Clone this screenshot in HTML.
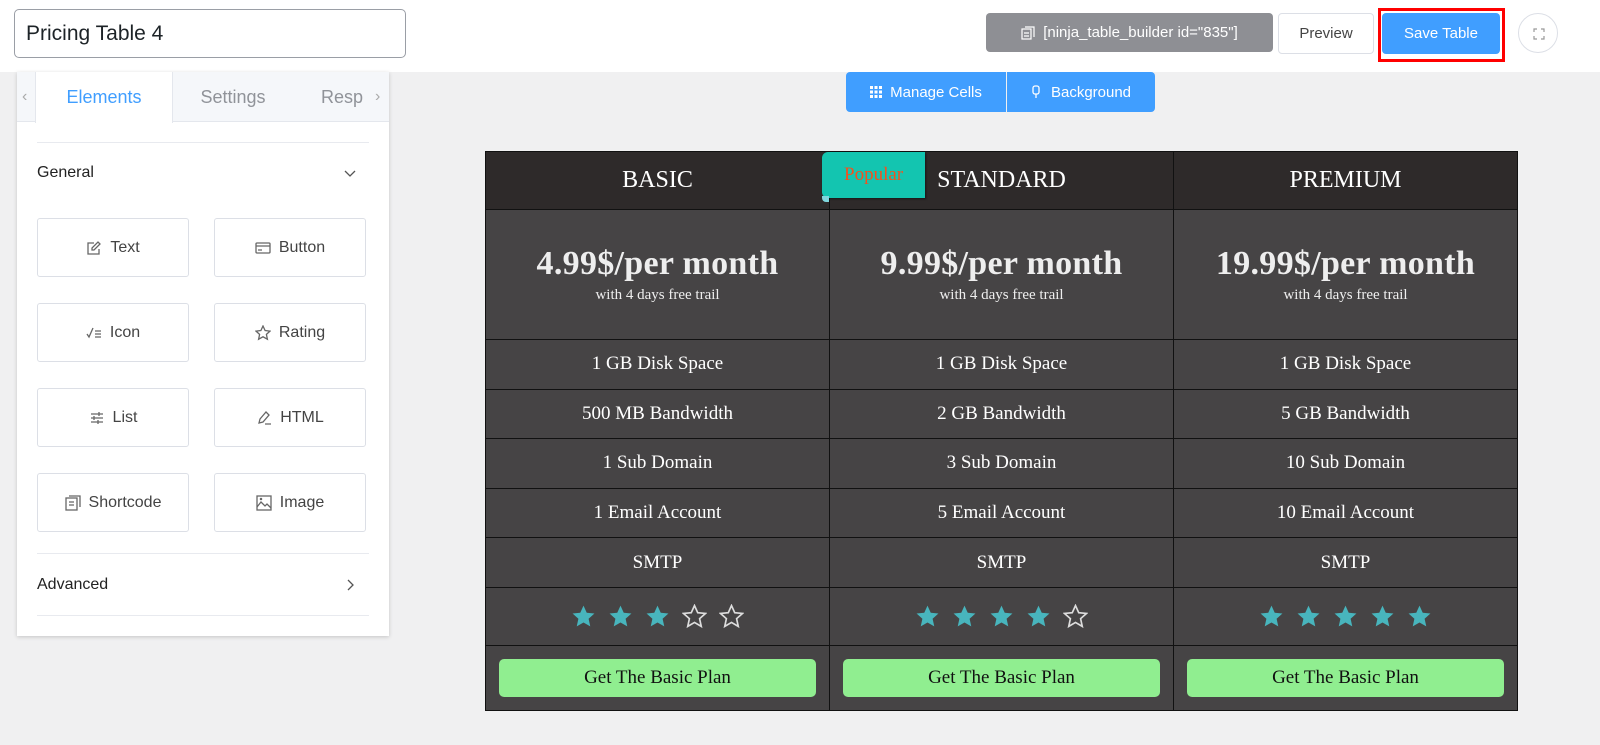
<!DOCTYPE html>
<html><head><style>
*{box-sizing:border-box;margin:0;padding:0}
body{width:1600px;height:745px;background:#f0f0f1;font-family:"Liberation Sans",sans-serif;position:relative;overflow:hidden}
.abs{position:absolute}
.top{left:0;top:0;width:1600px;height:72px;background:#fff}
.inp{left:14px;top:9px;width:392px;height:49px;border:1px solid #9a9ea6;border-radius:5px;font-size:21px;color:#1d2327;padding:12px 11px}
.btn{display:flex;align-items:center;justify-content:center;font-size:15px;border-radius:4px}
.panel{left:17px;top:72px;width:372px;height:564px;background:#fff;box-shadow:0 1px 4px rgba(0,0,0,.18)}
.tabs{left:0;top:0;width:372px;height:50px;background:#f5f7fa;border-bottom:1px solid #e4e7ed}
.tab{top:0;height:50px;font-size:18px;color:#909399;display:flex;align-items:center;justify-content:center}
.hr{left:20px;width:332px;height:1px;background:#e8eaef}
.card{width:152px;height:59px;border:1px solid #dcdfe6;border-radius:3px;display:flex;align-items:center;justify-content:center;font-size:16px;color:#444;gap:8px}
.card svg{width:16px;height:16px;stroke:#666;fill:none;stroke-width:1.3}
table{position:absolute;left:485px;top:151px;width:1033px;border-collapse:collapse;font-family:"Liberation Serif",serif;color:#fff}
td{border:1px solid #111;background:#464445;text-align:center;width:344px;font-size:19px}
.h td{background:#2e2a2a;height:58px;font-size:24px}
.p td{height:130px}
.p b{display:block;font-size:34px;font-weight:700;color:#eee;letter-spacing:.3px;line-height:38px}
.p span{font-size:15px;color:#eee}
.f td{height:49.6px}
.s td{height:58px}
.s svg{width:25px;height:25px;margin:0 6px;vertical-align:middle}
.g td{height:65px}
.g div{margin:0 13px;height:38px;background:#90ee90;border-radius:5px;color:#111;font-size:19px;display:flex;align-items:center;justify-content:center}
</style></head><body>
<div class="abs top"></div>
<div class="abs inp">Pricing Table 4</div>
<div class="abs btn" style="left:986px;top:13px;width:287px;height:39px;background:#8e8f94;color:#fff">
<svg width="14" height="14" viewBox="0 0 14 14" fill="none" stroke="#fff" stroke-width="1.2" style="margin-right:8px"><rect x="1" y="3" width="9" height="10"/><path d="M4 1h9v10M3 7h5M3 10h5"/></svg>[ninja_table_builder id="835"]</div>
<div class="abs btn" style="left:1278px;top:13px;width:96px;height:41px;border:1px solid #dcdfe6;color:#444;background:#fff">Preview</div>
<div class="abs" style="left:1378px;top:8px;width:127px;height:54px;border:3px solid #f00"></div>
<div class="abs btn" style="left:1382px;top:13px;width:118px;height:41px;background:#409eff;color:#fff">Save Table</div>
<div class="abs" style="left:1518px;top:13px;width:40px;height:40px;border:1px solid #dcdfe6;border-radius:50%;background:#fff"><svg width="40" height="40" viewBox="0 0 40 40" fill="none" stroke="#999" stroke-width="1.2"><path d="M15 18v-3h3M22 15h3v3M25 22v3h-3M18 25h-3v-3"/></svg></div>
<div class="abs btn" style="left:846px;top:72px;width:160px;height:40px;background:#409eff;color:#fff;border-radius:4px 0 0 4px"><svg width="12" height="12" viewBox="0 0 12 12" fill="#fff" style="margin-right:8px"><rect x="0" y="0" width="3" height="3"/><rect x="4.5" y="0" width="3" height="3"/><rect x="9" y="0" width="3" height="3"/><rect x="0" y="4.5" width="3" height="3"/><rect x="4.5" y="4.5" width="3" height="3"/><rect x="9" y="4.5" width="3" height="3"/><rect x="0" y="9" width="3" height="3"/><rect x="4.5" y="9" width="3" height="3"/><rect x="9" y="9" width="3" height="3"/></svg>Manage Cells</div>
<div class="abs btn" style="left:1007px;top:72px;width:148px;height:40px;background:#409eff;color:#fff;border-radius:0 4px 4px 0"><svg width="10" height="14" viewBox="0 0 10 14" fill="none" stroke="#fff" stroke-width="1.3" style="margin-right:10px"><rect x="2" y="1" width="6" height="8" rx="2"/><path d="M5 9v4"/></svg>Background</div>

<div class="abs panel">
 <div class="abs tabs"></div>
 <div class="abs" style="left:0;top:0;width:18px;height:50px;color:#aaa;font-size:16px;padding-top:16px;padding-left:5px">‹</div>
 <div class="abs tab" style="left:18px;width:138px;background:#fff;color:#409eff;border-left:1px solid #e4e7ed;border-right:1px solid #e4e7ed;height:51px">Elements</div>
 <div class="abs tab" style="left:156px;width:120px">Settings</div>
 <div class="abs tab" style="left:276px;width:80px;justify-content:flex-start;padding-left:28px">Resp</div>
 <div class="abs" style="left:358px;top:16px;color:#aaa;font-size:16px">›</div>
 <div class="abs hr" style="top:70px"></div>
 <div class="abs" style="left:20px;top:92px;font-size:16px;color:#222">General</div>
 <svg class="abs" style="left:326px;top:96px" width="14" height="10" viewBox="0 0 14 10" fill="none" stroke="#555" stroke-width="1.3"><path d="M2 3l5 5 5-5"/></svg>
 <div class="abs card" style="left:20px;top:146px"><svg viewBox="0 0 16 16"><path d="M13 9v5H2V3h6M8 10l-2 0 0-2 6-6 2 2z"/></svg>Text</div>
 <div class="abs card" style="left:197px;top:146px"><svg viewBox="0 0 16 16"><rect x="1" y="3" width="14" height="10" rx="1"/><path d="M1 6h14M3 10h4"/></svg>Button</div>
 <div class="abs card" style="left:20px;top:231px"><svg viewBox="0 0 16 16"><path d="M1 9l2 3 4-9M9 6h6M9 9h6M9 12h6"/></svg>Icon</div>
 <div class="abs card" style="left:197px;top:231px"><svg viewBox="0 0 16 16"><path d="M8 1l2.1 4.5 4.9.6-3.6 3.3 1 4.8L8 11.8 3.6 14.2l1-4.8L1 6.1l4.9-.6z"/></svg>Rating</div>
 <div class="abs card" style="left:20px;top:316px"><svg viewBox="0 0 16 16"><path d="M2 4h12M2 8h12M2 12h12M10 2v4M5 6v4M9 10v4"/></svg>List</div>
 <div class="abs card" style="left:197px;top:316px"><svg viewBox="0 0 16 16"><path d="M3 13l1-4 6-7 3 3-6 7zM9 14h6"/></svg>HTML</div>
 <div class="abs card" style="left:20px;top:401px"><svg viewBox="0 0 16 16"><rect x="1" y="3" width="11" height="12"/><path d="M4 1h11v11M4 7h5M4 10h5"/></svg>Shortcode</div>
 <div class="abs card" style="left:197px;top:401px"><svg viewBox="0 0 16 16"><rect x="1" y="1" width="14" height="14"/><path d="M1 12l4-5 4 4 2-2 4 4"/><circle cx="5" cy="4" r=".6"/></svg>Image</div>
 <div class="abs hr" style="top:481px"></div>
 <div class="abs" style="left:20px;top:504px;font-size:16px;color:#222">Advanced</div>
 <svg class="abs" style="left:328px;top:506px" width="10" height="14" viewBox="0 0 10 14" fill="none" stroke="#555" stroke-width="1.3"><path d="M3 2l5 5-5 5"/></svg>
 <div class="abs hr" style="top:543px"></div>
</div>

<svg width="0" height="0" style="position:absolute"><defs><symbol id="st" viewBox="0 0 24 24"><path d="M12 1.5l3.1 6.9 7.4.7-5.6 5 1.6 7.4L12 17.7l-6.5 3.8 1.6-7.4-5.6-5 7.4-.7z"/></symbol></defs></svg>
<table>
<tr class="h"><td>BASIC</td><td>STANDARD</td><td>PREMIUM</td></tr>
<tr class="p"><td><b>4.99$/per month</b><span>with 4 days free trail</span></td><td><b>9.99$/per month</b><span>with 4 days free trail</span></td><td><b>19.99$/per month</b><span>with 4 days free trail</span></td></tr>
<tr class="f"><td>1 GB Disk Space</td><td>1 GB Disk Space</td><td>1 GB Disk Space</td></tr>
<tr class="f"><td>500 MB Bandwidth</td><td>2 GB Bandwidth</td><td>5 GB Bandwidth</td></tr>
<tr class="f"><td>1 Sub Domain</td><td>3 Sub Domain</td><td>10 Sub Domain</td></tr>
<tr class="f"><td>1 Email Account</td><td>5 Email Account</td><td>10 Email Account</td></tr>
<tr class="f"><td>SMTP</td><td>SMTP</td><td>SMTP</td></tr>
<tr class="s">
<td><svg fill="#48b5bd"><use href="#st"/></svg><svg fill="#48b5bd"><use href="#st"/></svg><svg fill="#48b5bd"><use href="#st"/></svg><svg fill="none" stroke="#ddd" stroke-width="1.6"><use href="#st"/></svg><svg fill="none" stroke="#ddd" stroke-width="1.6"><use href="#st"/></svg></td>
<td><svg fill="#48b5bd"><use href="#st"/></svg><svg fill="#48b5bd"><use href="#st"/></svg><svg fill="#48b5bd"><use href="#st"/></svg><svg fill="#48b5bd"><use href="#st"/></svg><svg fill="none" stroke="#ddd" stroke-width="1.6"><use href="#st"/></svg></td>
<td><svg fill="#48b5bd"><use href="#st"/></svg><svg fill="#48b5bd"><use href="#st"/></svg><svg fill="#48b5bd"><use href="#st"/></svg><svg fill="#48b5bd"><use href="#st"/></svg><svg fill="#48b5bd"><use href="#st"/></svg></td>
</tr>
<tr class="g"><td><div>Get The Basic Plan</div></td><td><div>Get The Basic Plan</div></td><td><div>Get The Basic Plan</div></td></tr>
</table>
<div class="abs" style="left:822px;top:152px;width:103px;height:46px;background:#13c5b0;border-radius:6px 0 0 6px;box-shadow:1px 1px 2px rgba(0,0,0,.5);color:#f4511e;font-family:'Liberation Serif',serif;font-size:19px;padding:12px 0 0 22px">Popular</div>
<div class="abs" style="left:822px;top:196px;width:7px;height:6px;background:#7fd6dd;border-radius:0 0 0 4px"></div>
</body></html>
